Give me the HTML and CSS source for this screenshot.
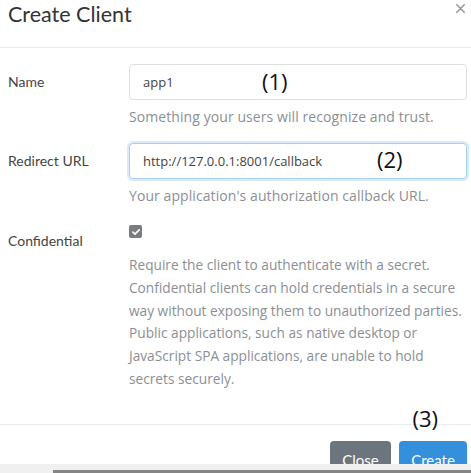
FILE: index.html
```html
<!DOCTYPE html>
<html>
<head>
<meta charset="utf-8">
<link rel="stylesheet" href="styles.css">
</head>
<body>
<div class="modal">
  <div class="modal-header">
    <h5 class="modal-title">Create Client</h5>
    <span class="close" aria-label="Close">
      <svg viewBox="0 0 9 9" width="9" height="9"><path d="M0.8 0.8 L8.2 8.2 M8.2 0.8 L0.8 8.2" stroke="#9a9a9a" stroke-width="1.6" stroke-linecap="round"/></svg>
    </span>
  </div>
  <div class="modal-body">
    <div class="row">
      <label class="label">Name</label>
      <div class="field">
        <div class="input-wrap">
          <div class="input">app1</div>
          <span class="note note1">(1)</span>
        </div>
        <div class="help">Something your users will recognize and trust.</div>
      </div>
    </div>
    <div class="row">
      <label class="label">Redirect URL</label>
      <div class="field">
        <div class="input-wrap">
          <div class="input focus">http://127.0.0.1:8001/callback</div>
          <span class="note note2">(2)</span>
        </div>
        <div class="help">Your application's authorization callback URL.</div>
      </div>
    </div>
    <div class="row row-check">
      <label class="label label-check">Confidential</label>
      <div class="field">
        <span class="checkbox">
          <svg viewBox="0 0 12 12" width="10" height="10"><path d="M2.3 6.2 L4.8 8.6 L9.8 3.4" fill="none" stroke="#fff" stroke-width="1.9" stroke-linecap="round" stroke-linejoin="round"/></svg>
        </span>
        <div class="help long">Require the client to authenticate with a secret. Confidential clients can hold credentials in a secure way without exposing them to unauthorized parties. Public applications, such as native desktop or JavaScript SPA applications, are unable to hold secrets securely.</div>
      </div>
    </div>
  </div>
  <div class="modal-footer">
    <span class="note note3">(3)</span>
    <button class="btn btn-secondary">Close</button>
    <button class="btn btn-primary">Create</button>
  </div>
  <div class="bottom-strip"><div class="bar"></div></div>
</div>
</body>
</html>
```
FILE: styles.css
```css
* { box-sizing: border-box; }
html, body { margin: 0; padding: 0; background: #fff; }
body {
  font-family: "Lato", "Open Sans", sans-serif;
  color: #444;
  width: 471px;
  height: 473px;
  overflow: hidden;
}
.modal { position: relative; height: 473px; overflow: hidden; }
.modal-header {
  display: flex;
  justify-content: space-between;
  align-items: flex-start;
  height: 48px;
  padding: 0 6px 0 8px;
  border-bottom: 1px solid #e9ecef;
}
.modal-title {
  margin: 0;
  font-size: 21.5px;
  font-weight: 400;
  line-height: 28px;
  color: #333;
}
.close {
  display: block;
  width: 9px;
  height: 9px;
  margin-top: 4px;
}
.close svg { display: block; }
.modal-body { padding: 16px 4px 0 8px; }
.row {
  display: grid;
  grid-template-columns: 121px 1fr;
  margin-bottom: 16px;
}
.label {
  font-size: 14px;
  line-height: 36px;
  color: #444;
}
.input-wrap { position: relative; }
.input {
  height: 36px;
  border: 1px solid #dcdfe3;
  border-radius: 4px;
  padding: 0 13px;
  font-family: "Open Sans", sans-serif;
  font-size: 13px;
  line-height: 34px;
  color: #444;
}
.input.focus {
  border-color: #a9cdf0;
  box-shadow: 0 0 0 2px #dbeaf8;
}
.help {
  margin-top: 6px;
  font-family: "Open Sans", sans-serif;
  font-size: 14px;
  letter-spacing: 0.08px;
  line-height: 21px;
  color: #8a8f95;
}
.help.long {
  font-size: 13.7px;
  letter-spacing: 0;
  line-height: 22.8px;
  margin-top: 16px;
}
.row-check { margin-top: 19px; }
.label-check { line-height: 20px; padding-top: 6px; }
.checkbox {
  display: flex;
  align-items: center;
  justify-content: center;
  width: 13px;
  height: 13px;
  border-radius: 2px;
  background: #7a7d80;
}
.note {
  position: absolute;
  font-family: "Open Sans", "Noto Sans", sans-serif;
  font-size: 22px;
  color: #111;
  line-height: 24px;
}
.note1 { left: 133px; top: 5px; }
.note2 { left: 248px; top: 4px; }
.modal-footer {
  position: relative;
  display: flex;
  justify-content: flex-end;
  gap: 8px;
  border-top: 1px solid #e9ecef;
  margin-top: 33px;
  padding: 16px 4px 0 0;
}
.note3 { right: 33px; top: -19px; }
.btn {
  font-family: "Lato", "Open Sans", sans-serif;
  font-size: 15px;
  color: #fff;
  border: none;
  border-radius: 4px;
  height: 38px;
  padding: 0 12px;
  line-height: 38px;
}
.btn-secondary { background: #6c757d; width: 61px; }
.btn-primary { background: #3490dc; width: 68px; }
.bottom-strip {
  position: absolute;
  left: 0; right: 0; bottom: 0;
  height: 9px;
  background: #f0f0f0;
}
.bar {
  position: absolute;
  left: 53px; right: 0; bottom: 0;
  height: 3px;
  background: #858585;
}
```
